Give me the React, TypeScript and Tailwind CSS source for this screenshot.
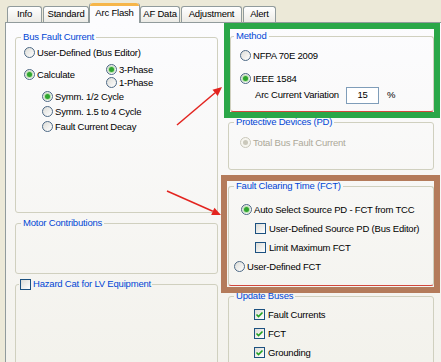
import React from 'react';

const font = "font-['Liberation_Sans',Arial,sans-serif] text-[9.5px] tracking-[-0.2px] text-black";

function Radio({ label, checked = false, disabled = false }: { label: string; checked?: boolean; disabled?: boolean }) {
  return (
    <div className="flex items-center gap-[2px]">
      <span
        className={
          disabled
            ? 'flex h-[11px] w-[11px] shrink-0 items-center justify-center rounded-full border border-[#cac8bb] bg-[#f6f5ef]'
            : 'flex h-[11px] w-[11px] shrink-0 items-center justify-center rounded-full border border-[#4d6985] bg-gradient-to-br from-[#dcdcd7] to-white'
        }
      >
        {checked && (
          <span
            className={
              disabled
                ? 'h-[5px] w-[5px] rounded-full bg-[#cac8bb]'
                : 'h-[5px] w-[5px] rounded-full bg-[#2fa52f] shadow-[0_0_0_1px_#b9e2b0]'
            }
          />
        )}
      </span>
      <span className={disabled ? 'leading-[12px] text-[#aca899]' : 'leading-[12px]'}>{label}</span>
    </div>
  );
}

function Check({ label, checked = false }: { label: string; checked?: boolean }) {
  return (
    <div className="flex items-center gap-[3px]">
      <span className="flex h-[11px] w-[11px] shrink-0 items-center justify-center border border-[#1c5180] bg-gradient-to-br from-[#dcdcd7] to-white">
        {checked && (
          <svg width="9" height="9" viewBox="0 0 9 9">
            <path d="M1.5 4.5 L3.5 6.5 L7.5 2.5" fill="none" stroke="#21a121" strokeWidth="1.6" />
          </svg>
        )}
      </span>
      <span className="leading-[12px]">{label}</span>
    </div>
  );
}

function Tab({ label, w, selected = false }: { label: string; w: string; selected?: boolean }) {
  if (selected) {
    return (
      <div className={`${w} relative -mb-px flex h-[20px] flex-col rounded-t-[3px] border-x border-[#919b9c] bg-[#fcfcfe]`}>
        <div className="h-[3px] rounded-t-[3px] bg-[#f6b64a]" />
        <div className="flex flex-1 items-center justify-center pb-[2px]">{label}</div>
      </div>
    );
  }
  return (
    <div className={`${w} flex h-[16px] items-center justify-center rounded-t-[3px] border-x border-t border-[#919b9c] bg-gradient-to-b from-white to-[#ecebe6]`}>
      {label}
    </div>
  );
}

export default function App() {
  return (
    <div className={`relative h-[362px] w-[441px] overflow-hidden bg-[#ece9d8] ${font}`}>
      <div className="relative z-10 flex h-[22px] items-end pl-[7px]">
        <Tab label="Info" w="w-[35px]" />
        <div className="w-px" />
        <Tab label="Standard" w="w-[46px]" />
        <Tab label="Arc Flash" w="w-[51px]" selected />
        <Tab label="AF Data" w="w-[40px]" />
        <div className="w-px" />
        <Tab label="Adjustment" w="w-[61px]" />
        <div className="w-px" />
        <Tab label="Alert" w="w-[33px]" />
      </div>

      <div className="ml-[5px] flex h-[340px] gap-[10px] border-l border-t border-[#919b9c] bg-gradient-to-b from-[#fcfcfe] to-[#f3f2ec] pl-[9px]">
        {/* left column */}
        <div className="flex w-[203px] flex-col gap-[4px] pt-[8px]">
          <fieldset className="h-[182px] shrink-0 rounded-[3px] border border-[#d0d0bf]">
            <legend className="ml-[5px] px-[2px] leading-[12px] text-[#0046d5]">Bus Fault Current</legend>
            <div className="flex flex-col pl-[8px] pt-[2px]">
              <div className="flex h-[15px] items-center">
                <Radio label="User-Defined (Bus Editor)" />
              </div>
              <div className="mt-[3px] flex">
                <div className="mt-[4px] flex h-[15px] w-[82px] items-center">
                  <Radio label="Calculate" checked />
                </div>
                <div className="flex flex-col">
                  <div className="flex h-[13px] items-center">
                    <Radio label="3-Phase" checked />
                  </div>
                  <div className="flex h-[13px] items-center">
                    <Radio label="1-Phase" />
                  </div>
                </div>
              </div>
              <div className="ml-[18px] flex flex-col">
                <div className="flex h-[15px] items-center">
                  <Radio label="Symm. 1/2 Cycle" checked />
                </div>
                <div className="flex h-[15px] items-center">
                  <Radio label="Symm. 1.5 to 4 Cycle" />
                </div>
                <div className="flex h-[15px] items-center">
                  <Radio label="Fault Current Decay" />
                </div>
              </div>
            </div>
          </fieldset>

          <fieldset className="h-[57px] shrink-0 rounded-[3px] border border-[#d0d0bf]">
            <legend className="ml-[5px] px-[2px] leading-[12px] text-[#0046d5]">Motor Contributions</legend>
          </fieldset>

          <fieldset className="h-[120px] shrink-0 rounded-[3px] border border-[#d0d0bf]">
            <legend className="ml-[3px] flex items-center gap-[2px] px-px leading-[12px] text-[#0046d5]">
              <span className="h-[11px] w-[11px] border border-[#1c5180] bg-gradient-to-br from-[#dcdcd7] to-white" />
              <span>Hazard Cat for LV Equipment</span>
            </legend>
          </fieldset>
        </div>

        {/* right column */}
        <div className="flex w-[206px] flex-col pt-[7px]">
          <fieldset className="ml-[2px] h-[82px] w-[204px] shrink-0 rounded-[3px] border border-[#d0d0bf] border-b-[#d2473c]">
            <legend className="ml-[3px] px-[2px] leading-[12px] text-[#0046d5]">Method</legend>
            <div className="flex flex-col pl-[9px] pt-[6px]">
              <div className="flex h-[15px] items-center">
                <Radio label="NFPA 70E 2009" />
              </div>
              <div className="mt-[8px] flex h-[15px] items-center">
                <Radio label="IEEE 1584" checked />
              </div>
              <div className="mt-px flex h-[17px] items-center pl-[15px]">
                <span className="w-[91px]">Arc Current Variation</span>
                <span className="flex h-[17px] w-[33px] items-center justify-center border border-[#7f9db9] bg-white">15</span>
                <span className="ml-[8px]">%</span>
              </div>
            </div>
          </fieldset>

          <fieldset className="mt-[4px] h-[54px] shrink-0 rounded-[3px] border border-[#d0d0bf]">
            <legend className="ml-[5px] px-[2px] leading-[12px] text-[#0046d5]">Protective Devices (PD)</legend>
            <div className="flex pl-[11px] pt-[7px]">
              <div className="flex h-[15px] items-center">
                <Radio label="Total Bus Fault Current" checked disabled />
              </div>
            </div>
          </fieldset>

          <fieldset className="mt-[10px] h-[106px] shrink-0 rounded-[3px] border border-[#d0d0bf] border-b-[#d2473c]">
            <legend className="ml-[5px] px-[2px] leading-[12px] text-[#0046d5]">Fault Clearing Time (FCT)</legend>
            <div className="flex flex-col pt-[8px]">
              <div className="flex h-[19px] items-center pl-[12px]">
                <Radio label="Auto Select Source PD - FCT from TCC" checked />
              </div>
              <div className="flex h-[19px] items-center pl-[26px]">
                <Check label="User-Defined Source PD (Bus Editor)" />
              </div>
              <div className="flex h-[19px] items-center pl-[26px]">
                <Check label="Limit Maximum FCT" />
              </div>
              <div className="flex h-[19px] items-center pl-[5px]">
                <Radio label="User-Defined FCT" />
              </div>
            </div>
          </fieldset>

          <fieldset className="mt-[4px] h-[90px] shrink-0 rounded-[3px] border border-[#d0d0bf]">
            <legend className="ml-[5px] px-[2px] leading-[12px] text-[#0046d5]">Update Buses</legend>
            <div className="flex flex-col pl-[25px] pt-[3px]">
              <div className="flex h-[19px] items-center">
                <Check label="Fault Currents" checked />
              </div>
              <div className="flex h-[19px] items-center">
                <Check label="FCT" checked />
              </div>
              <div className="flex h-[19px] items-center">
                <Check label="Grounding" checked />
              </div>
            </div>
          </fieldset>
        </div>
      </div>

      {/* annotation overlays */}
      <div className="absolute left-[224px] top-[23px] h-[95px] w-[216px] border-[6px] border-[#2aa748]" />
      <div className="absolute left-[221px] top-[175px] h-[118px] w-[219px] border-[6px] border-[#b47b5b]" />
      <svg className="pointer-events-none absolute inset-0" width="441" height="362">
        <line x1="177" y1="125" x2="215.1" y2="92.8" stroke="#e3241f" strokeWidth="1.5" />
        <polygon points="222,87 217.7,95.9 212.5,89.7" fill="#e3241f" />
        <line x1="167" y1="191" x2="212.8" y2="211.3" stroke="#e3241f" strokeWidth="1.5" />
        <polygon points="221,215 211.2,215 214.4,207.7" fill="#e3241f" />
      </svg>
    </div>
  );
}
